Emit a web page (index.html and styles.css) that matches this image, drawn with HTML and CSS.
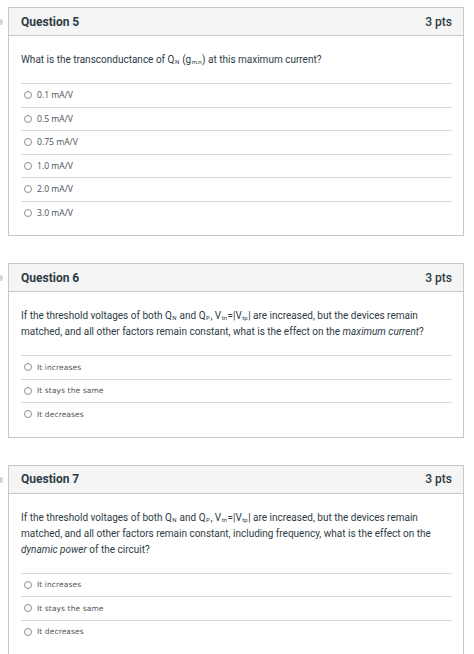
FILE: index.html
```html
<!DOCTYPE html>
<html>
<head>
<meta charset="utf-8">
<link rel="stylesheet" href="styles.css">
</head>
<body>
<div class="page">
  <section class="card">
    <div class="card-head">
      <span class="title">Question 5</span>
      <span class="pts">3 pts</span>
    </div>
    <div class="card-body">
      <p class="q">What is the transconductance of Q<sub>N</sub> (g<sub>m,n</sub>) at this maximum current?</p>
      <ul class="opts">
        <li><span class="radio"></span>0.1 mA/V</li>
        <li><span class="radio"></span>0.5 mA/V</li>
        <li><span class="radio"></span>0.75 mA/V</li>
        <li><span class="radio"></span>1.0 mA/V</li>
        <li><span class="radio"></span>2.0 mA/V</li>
        <li><span class="radio"></span>3.0 mA/V</li>
      </ul>
    </div>
  </section>

  <section class="card">
    <div class="card-head">
      <span class="title">Question 6</span>
      <span class="pts">3 pts</span>
    </div>
    <div class="card-body">
      <p class="q">If the threshold voltages of both Q<sub>N</sub> and Q<sub>P</sub>, V<sub>tn</sub>=|V<sub>tp</sub>| are increased, but the devices remain matched, and all other factors remain constant, what is the effect on the <em>maximum current</em>?</p>
      <ul class="opts words">
        <li><span class="radio"></span>It increases</li>
        <li><span class="radio"></span>It stays the same</li>
        <li><span class="radio"></span>It decreases</li>
      </ul>
    </div>
  </section>

  <section class="card">
    <div class="card-head">
      <span class="title">Question 7</span>
      <span class="pts">3 pts</span>
    </div>
    <div class="card-body">
      <p class="q">If the threshold voltages of both Q<sub>N</sub> and Q<sub>P</sub>, V<sub>tn</sub>=|V<sub>tp</sub>| are increased, but the devices remain matched, and all other factors remain constant, including frequency, what is the effect on the <em>dynamic power</em> of the circuit?</p>
      <ul class="opts words">
        <li><span class="radio"></span>It increases</li>
        <li><span class="radio"></span>It stays the same</li>
        <li><span class="radio"></span>It decreases</li>
      </ul>
    </div>
  </section>
</div>
</body>
</html>
```

FILE: styles.css
```css
html, body {
  margin: 0;
  padding: 0;
  background: #ffffff;
}

.page {
  display: flex;
  flex-direction: column;
  gap: 27px;
  padding: 7px 10px 0 8px;
  font-family: Roboto, "Liberation Sans", sans-serif;
  color: #2d3b45;
}

.card {
  position: relative;
  border: 1px solid #c4c8cb;
}

.card::before {
  content: "";
  position: absolute;
  left: -10px;
  top: 11px;
  width: 4px;
  height: 6px;
  border-radius: 50%;
  background: #d3d6d8;
}

.card-head {
  display: flex;
  justify-content: space-between;
  align-items: center;
  height: 27px;
  padding: 0 11px 0 12px;
  background: #f5f5f5;
  border-bottom: 1px solid #c4c8cb;
}

.title {
  font-size: 12px;
  font-weight: 700;
  color: #2d3b45;
}

.pts {
  font-size: 12px;
  font-weight: 500;
  color: #2d3b45;
}

.card-body {
  padding: 16px 11px 11px 12px;
}

.q {
  margin: 0 0 15px 0;
  font-size: 10px;
  line-height: 16px;
  color: #2d3b45;
}

.q sub {
  display: inline-block;
  font-size: 6px;
  line-height: 6px;
  vertical-align: -1px;
  margin: 0 0.5px;
}

.q em {
  font-style: italic;
}

.opts {
  list-style: none;
  margin: 0;
  padding: 0;
}

.opts li {
  box-sizing: border-box;
  display: flex;
  align-items: center;
  gap: 5px;
  height: 23.5px;
  padding-left: 3px;
  border-top: 1px solid #d6d9db;
  font-family: "Open Sans", "Liberation Sans", sans-serif;
  font-size: 8.6px;
  color: #4a5158;
}

.opts.words li {
  font-family: "DejaVu Sans", Verdana, sans-serif;
  font-size: 7.5px;
  letter-spacing: 0.1px;
  color: #50565c;
}

.radio {
  width: 6px;
  height: 6px;
  border: 1px solid #8b9094;
  border-radius: 50%;
  flex-shrink: 0;
}
```
